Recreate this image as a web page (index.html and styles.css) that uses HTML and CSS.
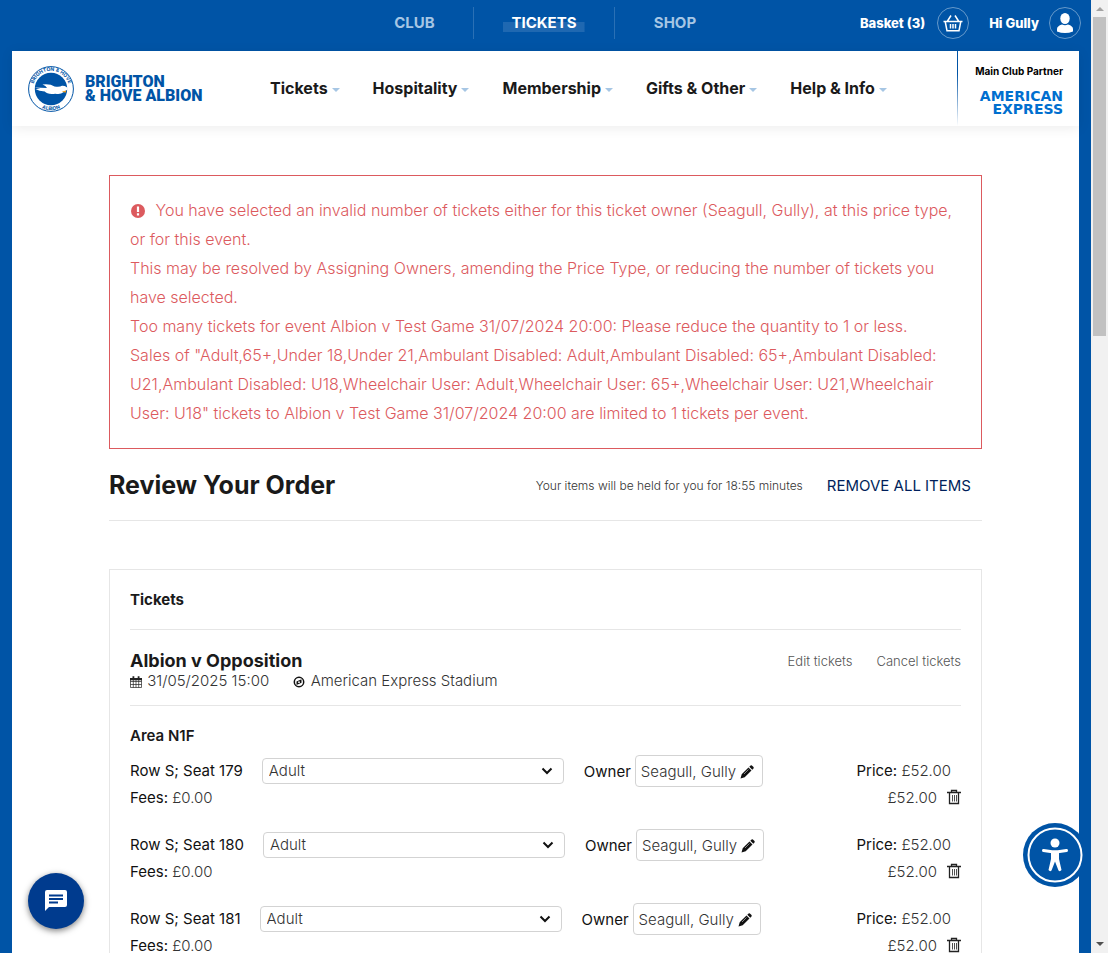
FILE: index.html
```
<!DOCTYPE html>
<html lang="en">
<head>
    <meta charset="UTF-8">
    <meta name="viewport" content="width=device-width, initial-scale=1.0">
    <title>Review Your Order | Brighton &amp; Hove Albion</title>
    <link rel="stylesheet" href="styles.css">
</head>
<body>
    <!-- Shared icons -->
    <svg class="sprite" aria-hidden="true">
        <symbol id="chevron" viewBox="0 0 12 8">
            <path d="M1.5 1.5 6 6l4.500-4.500" fill="none" stroke="#111" stroke-width="2"/>
        </symbol>
        <symbol id="pencil" viewBox="0 0 14 14">
            <path d="M.5 13.500 1.700 9.300 8.500 2.500 11.500 5.500 4.700 12.300ZM9.300 1.700 10.600.5q.7-.5 1.300 0l1.600 1.600q.5.6 0 1.300L12.300 4.700Z" fill="#111"/>
            <path d="M4 9 8.500 4.500" stroke="#fff" stroke-width=".5"/>
        </symbol>
        <symbol id="trash" viewBox="0 0 14 16">
            <path d="M0 3.500h14M4.500 3.500V1.500h5v2M2.500 3.500v11h9v-11" fill="none" stroke="#222" stroke-width="1.300"/>
            <path d="M5.500 6v6.500M7.500 6v6.500M9.500 6v6.500" fill="none" stroke="#222" stroke-width=".8"/>
        </symbol>
    </svg>

    <div class="page">
        <div class="topbar">
            <nav class="sites">
                <a href="#">CLUB</a>
                <a href="#" class="active"><span>TICKETS</span></a>
                <a href="#">SHOP</a>
            </nav>
            <div class="account">
                <a href="#">Basket (3)
                    <span class="circle">
                        <svg width="20" height="18" viewBox="0 0 20 18" fill="none" stroke="#fff" stroke-width="1.500">
                            <path d="M.5 7.500h19M4.500 7 8 1.500M15.500 7 12 1.500M2.300 8l1.700 8.700h12L17.700 8M7.500 10v4.500M10 10v4.500M12.500 10v4.500"/>
                        </svg>
                    </span>
                </a>
                <a href="#">Hi Gully
                    <span class="circle">
                        <svg width="18" height="20" viewBox="0 0 18 20" fill="#fff">
                            <ellipse cx="9" cy="5.500" rx="4.700" ry="5.500"/>
                            <path d="M1 18.500V16q0-3 5-4.500 3 1.500 6 0 5 1.500 5 4.500v2.500q-8 3-16 0Z"/>
                        </svg>
                    </span>
                </a>
            </div>
        </div>

        <div class="panel">
            <header class="header">
                <a href="#" class="brand">
                    <svg class="crest" viewBox="0 0 46 46">
                        <defs>
                            <path id="arcTop" d="M4.800 23a18.200 18.200 0 0 1 36.400 0"/>
                            <path id="arcBottom" d="M1.800 23a21.200 21.200 0 0 0 42.400 0"/>
                        </defs>
                        <circle cx="23" cy="23" r="22.400" fill="#fff" stroke="#0054a6"/>
                        <circle cx="23" cy="23" r="16.200" fill="#0054a6"/>
                        <text class="crest-text"><textPath href="#arcTop" startOffset="50%">BRIGHTON &amp; HOVE</textPath></text>
                        <text class="crest-text"><textPath href="#arcBottom" startOffset="50%">ALBION</textPath></text>
                        <path d="M6.500 21.500 19 22q-1-2.300-4.500-3.500 8-.8 12 2 5 1 7.500-.7 5-.2 6 3.500l-5 3.200q-2 2-7.700 1.200-8 1-10.500-2.200Q11 25 7.500 23l5-.3Z" fill="#fff"/>
                        <path d="m33.800 25.500 4.500-1-.8 2.300Z" fill="#f5a01a"/>
                    </svg>
                    <span class="brand-name">BRIGHTON<br>&amp; HOVE ALBION</span>
                </a>
                <nav class="menu">
                    <a href="#">Tickets</a>
                    <a href="#">Hospitality</a>
                    <a href="#">Membership</a>
                    <a href="#">Gifts &amp; Other</a>
                    <a href="#">Help &amp; Info</a>
                </nav>
                <div class="partner">
                    <span>Main Club Partner</span>
                    <a href="#" class="amex">AMERICAN<br>EXPRESS</a>
                </div>
            </header>

            <main class="content">
                <div class="alert" role="alert">
                    <svg class="alert-icon" viewBox="0 0 14 14">
                        <circle cx="7" cy="7" r="7" fill="#dc5a5e"/>
                        <path d="M7 2.500v5.500M7 9.300v2.200" stroke="#fff" stroke-width="2.200"/>
                    </svg>
                    You have selected an invalid number of tickets either for this ticket owner (Seagull, Gully), at this price type, or for this event.<br>
                    This may be resolved by Assigning Owners, amending the Price Type, or reducing the number of tickets you have selected.<br>
                    Too many tickets for event Albion v Test Game 31/07/2024 20:00: Please reduce the quantity to 1 or less.<br>
                    Sales of "Adult,65+,Under 18,Under 21,Ambulant Disabled: Adult,Ambulant Disabled: 65+,Ambulant Disabled: U21,Ambulant Disabled: U18,Wheelchair User: Adult,Wheelchair User: 65+,Wheelchair User: U21,Wheelchair User: U18" tickets to Albion v Test Game 31/07/2024 20:00 are limited to 1 tickets per event.
                </div>

                <div class="title-row">
                    <h1>Review Your Order</h1>
                    <span class="timer">Your items will be held for you for 18:55 minutes</span>
                    <button type="button" class="remove-all">REMOVE ALL ITEMS</button>
                </div>

                <section class="card">
                    <h2>Tickets</h2>
                    <div class="event">
                        <div class="event-info">
                            <h3>Albion v Opposition</h3>
                            <p>
                                <svg width="12" height="12" viewBox="0 0 12 12">
                                    <path d="M.5 2.500h11v9H.5ZM.5 5.500h11M.5 8.500h11M3.300 4v7.500M6 4v7.500M8.700 4v7.500" fill="none" stroke="#222" stroke-width=".7"/>
                                    <path d="M0 2h12v2.200H0ZM2.500.3h1.800v2H2.500ZM7.700.3h1.800v2H7.700Z" fill="#222"/>
                                </svg>
                                31/05/2025 15:00
                                <svg class="place" width="12" height="12" viewBox="0 0 12 12">
                                    <circle cx="6" cy="6" r="4.700" fill="none" stroke="#111" stroke-width="1.500"/>
                                    <path d="M8.500 3.200v3.500L3.500 9V5.500Z" fill="#111"/>
                                    <circle cx="6" cy="6.200" r=".9" fill="#fff"/>
                                </svg>
                                American Express Stadium
                            </p>
                        </div>
                        <a href="#">Edit tickets</a>
                        <a href="#">Cancel tickets</a>
                    </div>

                    <h4>Area N1F</h4>

                    <div class="seat">
                        <div class="seat-main">
                            <label for="type179">Row S; Seat 179</label>
                            <span class="select">
                                <select id="type179"><option>Adult</option></select>
                                <svg><use href="#chevron"/></svg>
                            </span>
                            <span class="owner" id="owner179">Owner</span>
                            <button type="button" aria-describedby="owner179">Seagull, Gully <svg><use href="#pencil"/></svg></button>
                            <span class="price"><b>Price:</b> £52.00</span>
                        </div>
                        <div class="seat-sub">
                            <span><b>Fees:</b> £0.00</span>
                            <span class="total">£52.00</span>
                            <button type="button" aria-label="Remove seat 179"><svg><use href="#trash"/></svg></button>
                        </div>
                    </div>

                    <div class="seat">
                        <div class="seat-main">
                            <label for="type180">Row S; Seat 180</label>
                            <span class="select">
                                <select id="type180"><option>Adult</option></select>
                                <svg><use href="#chevron"/></svg>
                            </span>
                            <span class="owner" id="owner180">Owner</span>
                            <button type="button" aria-describedby="owner180">Seagull, Gully <svg><use href="#pencil"/></svg></button>
                            <span class="price"><b>Price:</b> £52.00</span>
                        </div>
                        <div class="seat-sub">
                            <span><b>Fees:</b> £0.00</span>
                            <span class="total">£52.00</span>
                            <button type="button" aria-label="Remove seat 180"><svg><use href="#trash"/></svg></button>
                        </div>
                    </div>

                    <div class="seat">
                        <div class="seat-main">
                            <label for="type181">Row S; Seat 181</label>
                            <span class="select">
                                <select id="type181"><option>Adult</option></select>
                                <svg><use href="#chevron"/></svg>
                            </span>
                            <span class="owner" id="owner181">Owner</span>
                            <button type="button" aria-describedby="owner181">Seagull, Gully <svg><use href="#pencil"/></svg></button>
                            <span class="price"><b>Price:</b> £52.00</span>
                        </div>
                        <div class="seat-sub">
                            <span><b>Fees:</b> £0.00</span>
                            <span class="total">£52.00</span>
                            <button type="button" aria-label="Remove seat 181"><svg><use href="#trash"/></svg></button>
                        </div>
                    </div>
                </section>
            </main>
        </div>

        <!-- Floating buttons -->
        <button type="button" class="chat" aria-label="Chat">
            <svg width="24" height="24" viewBox="0 0 24 24">
                <path d="M3 1h18q2 0 2 2v13q0 2-2 2H5l-4 4V3q0-2 2-2Z" fill="#fff"/>
                <path d="M5 6.500h14M5 10h14M5 13.500h9" stroke="#003b8e" stroke-width="2"/>
            </svg>
        </button>
        <button type="button" class="access" aria-label="Accessibility options">
            <svg width="64" height="64" viewBox="0 0 64 64">
                <circle cx="32" cy="32" r="32" fill="#0054a6"/>
                <circle cx="32" cy="32" r="26.500" fill="none" stroke="#fff" stroke-width="2"/>
                <circle cx="32" cy="20" r="4.500" fill="#fff"/>
                <path d="M20.500 27.500 29 28.800h6l8.500-1.300" fill="none" stroke="#fff" stroke-width="3" stroke-linecap="round"/>
                <path d="M28 28h8v8l2.500 11q-1.500 2-3 .5L32 38.500 28.500 47.500q-1.500 1.500-3-.5L28 36Z" fill="#fff"/>
            </svg>
        </button>
    </div>

    <div class="scrollbar">
        <span class="arrow-up"></span>
        <span class="thumb"></span>
        <span class="arrow-down"></span>
    </div>
</body>
</html>
```
FILE: styles.css
```
* {
    box-sizing: border-box;
}
body {
    margin: 0;
    height: 100vh;
    display: flex;
    overflow: hidden;
    font-family: Inter, "Liberation Sans", sans-serif;
    font-size: 15px;
    font-weight: 300;
    color: #333;
    background-color: #0054a6;
}
a {
    color: inherit;
    text-decoration: none;
}
button,
select {
    font: inherit;
    color: inherit;
    background: none;
    border: 0;
    padding: 0;
}
h1, h2, h3, h4, p {
    margin: 0;
}
.sprite {
    display: none;
}
.page {
    flex: 1;
    position: relative;
    overflow: hidden;
}

/* Blue bar */
.topbar {
    height: 51px;
    position: relative;
    display: flex;
    align-items: center;
    justify-content: center;
    padding-bottom: 5px;
    color: #fff;
}
.sites {
    display: flex;
    font-weight: 700;
}
.sites a {
    width: 142px;
    height: 32px;
    line-height: 32px;
    text-align: center;
    color: #a6c6e4;
}
.sites a:nth-child(1) {
    width: 117px;
}
.sites a:nth-child(3) {
    width: 120px;
}
.sites .active {
    color: #fff;
    border: 1px solid #2a70b5;
    border-width: 0 1px;
}
.active span {
    padding: 0 8px;
    background: linear-gradient(#1f68b1, #1f68b1) bottom / 100% 10px no-repeat;
}
.account {
    position: absolute;
    right: 10px;
    top: 7px;
    display: flex;
    gap: 20px;
    font-size: 13px;
    font-weight: 800;
}
.account a {
    display: flex;
    align-items: center;
    gap: 12px;
}
.account a:last-child {
    gap: 10px;
}
.circle {
    width: 32px;
    height: 32px;
    display: flex;
    align-items: center;
    justify-content: center;
    border: 1px solid #6699ca;
    border-radius: 50%;
}

/* White panel */
.panel {
    margin: 0 12px;
    min-height: 100%;
    background-color: #fff;
}
.header {
    height: 75px;
    display: flex;
    align-items: center;
    padding-left: 16px;
    box-shadow: 0 2px 12px rgba(0, 0, 0, 0.08);
}
.brand {
    width: 242px;
    display: flex;
    align-items: center;
    gap: 11px;
    color: #0054a6;
}
.crest {
    width: 46px;
    height: 46px;
}
.crest-text {
    font-size: 5px;
    font-weight: 700;
    text-anchor: middle;
    fill: #0054a6;
}
.brand-name {
    font: 900 16px/14px Roboto, sans-serif;
    white-space: nowrap;
}
.menu {
    flex: 1;
    display: flex;
    gap: 33px;
    padding-bottom: 2px;
    font-size: 16px;
    font-weight: 700;
    white-space: nowrap;
    color: #1a1a1a;
}
.menu a:after {
    content: '';
    display: inline-block;
    margin-left: 4px;
    vertical-align: 2px;
    border: 4px solid transparent;
    border-top-color: #a6c6e4;
    border-bottom: 0;
}
.partner {
    width: 122px;
    height: 75px;
    padding: 13px 16px 0;
    text-align: right;
    font-size: 10px;
    font-weight: 700;
    line-height: 14px;
    white-space: nowrap;
    color: #000;
    background: linear-gradient(#0054a6 30%, #fff) left / 1px 100% no-repeat;
}
.amex {
    display: block;
    margin-top: 12px;
    font: 700 14px/13px "DejaVu Sans", sans-serif;
    color: #006fcf;
}

.content {
    padding: 49px 97px;
}
.alert {
    padding: 20px;
    border: 1px solid #dc5a5e;
    font-size: 16px;
    line-height: 29px;
    color: #dc5a5e;
}
.alert-icon {
    width: 14px;
    height: 14px;
    margin-left: 1px;
    margin-right: 6px;
    vertical-align: -2px;
}
.title-row {
    display: flex;
    align-items: center;
    height: 72px;
    padding-right: 11px;
    border-bottom: 1px solid #e6e6e6;
}
h1 {
    flex: 1;
    font-size: 25px;
    font-weight: 700;
    color: #1a1a1a;
}
.timer {
    padding-top: 2px;
    font-size: 12px;
}
.remove-all {
    margin-left: 24px;
    padding-top: 2px;
    font-weight: 400;
    color: #001f5b;
}

/* Order card */
.card {
    margin-top: 48px;
    padding: 0 20px;
    border: 1px solid #e6e6e6;
}
h2 {
    font-size: 15px;
    font-weight: 700;
    line-height: 59px;
    color: #1a1a1a;
    border-bottom: 1px solid #e6e6e6;
}
.event {
    display: flex;
    gap: 24px;
    height: 76px;
    padding-top: 21px;
    border-bottom: 1px solid #e6e6e6;
    font-size: 13px;
    line-height: 20px;
    color: #555;
}
.event-info {
    flex: 1;
    color: #333;
}
h3 {
    font-size: 18px;
    font-weight: 700;
    line-height: 20px;
    color: #1a1a1a;
}
.event-info p {
    font-size: 15px;
    line-height: 20px;
}
.event-info svg {
    margin-right: 1px;
    vertical-align: -2px;
}
.event-info .place {
    margin-left: 20px;
}
h4 {
    padding-top: 20px;
    font-size: 15px;
    font-weight: 600;
    line-height: 20px;
    color: #1a1a1a;
}
.seat {
    height: 74px;
}
h4 + .seat {
    margin-top: 9px;
}
.seat-main {
    display: flex;
    align-items: center;
    height: 32px;
    white-space: nowrap;
}
.seat label,
.seat b,
.owner {
    font-weight: 400;
    color: #111;
}
.seat label,
.price {
    padding-bottom: 2px;
}
.select {
    position: relative;
    width: 302px;
    margin: 0 20px 0 19px;
}
.select select {
    display: block;
    width: 100%;
    height: 26px;
    padding: 0 6px 2px;
    border: 1px solid #d3d3d3;
    border-radius: 4px;
    appearance: none;
}
.select svg {
    position: absolute;
    right: 11px;
    top: 9px;
    width: 12px;
    height: 8px;
    pointer-events: none;
}
.seat-main button {
    height: 32px;
    margin-left: 4px;
    padding: 0 8px 0 5px;
    border: 1px solid #d3d3d3;
    border-radius: 4px;
}
.seat-main button svg {
    width: 14px;
    height: 14px;
    vertical-align: -2px;
}
.price {
    margin-left: auto;
    margin-right: 10px;
}
.seat-sub {
    display: flex;
    align-items: center;
    height: 20px;
}
.total {
    margin-left: auto;
    margin-right: 10px;
}
.seat-sub svg {
    display: block;
    width: 14px;
    height: 16px;
}

/* Buttons that float over the page */
.chat {
    position: absolute;
    left: 28px;
    bottom: 24px;
    width: 56px;
    height: 56px;
    border-radius: 50%;
    background-color: #003b8e;
    box-shadow: 0 2px 6px rgba(0, 0, 0, 0.5);
}
.chat svg {
    display: block;
    margin: auto;
}
.access {
    position: absolute;
    right: 4px;
    bottom: 66px;
}
.access svg {
    display: block;
}

/* Scrollbar */
.scrollbar {
    width: 17px;
    display: flex;
    flex-direction: column;
    align-items: center;
    padding: 7px 0;
    background-color: #f1f1f1;
}
.arrow-up {
    border: 4px solid transparent;
    border-top: 0;
    border-bottom-color: #a3a3a3;
}
.thumb {
    width: 13px;
    height: 319px;
    margin-top: 6px;
    background-color: #c1c1c1;
}
.arrow-down {
    margin-top: auto;
    border: 4px solid transparent;
    border-bottom: 0;
    border-top-color: #505050;
}
```
